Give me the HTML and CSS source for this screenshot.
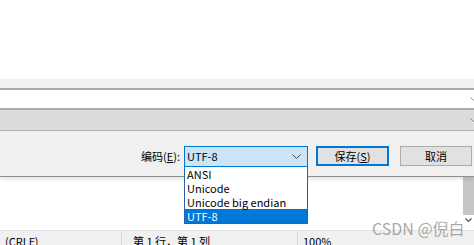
FILE: index.html
```html
<!DOCTYPE html>
<html lang="zh-CN">
<head>
<meta charset="utf-8">
<title>Save dialog</title>
<link rel="stylesheet" href="styles.css">
</head>
<body>
<div class="top"></div>
<div class="strip"></div>
<div class="field field-white">
  <svg class="chev" width="7" height="5" viewBox="0 0 7 5"><path d="M0.5 0.5 L3.5 3.5 L6.5 0.5" fill="none" stroke="#8a8a8a" stroke-width="1"/></svg>
</div>
<div class="field field-gray">
  <svg class="chev" width="7" height="5" viewBox="0 0 7 5"><path d="M0.5 0.5 L3.5 3.5 L6.5 0.5" fill="none" stroke="#8a8a8a" stroke-width="1"/></svg>
</div>
<div class="dialog">
  <span class="label">编码(<u>E</u>):</span>
  <div class="combo">
    <span class="combo-text">UTF-8</span>
    <svg class="combo-chev" width="9" height="5" viewBox="0 0 9 5"><path d="M0.5 0.5 L4.5 4.5 L8.5 0.5" fill="none" stroke="#444" stroke-width="1"/></svg>
    <ul class="list">
      <li>ANSI</li>
      <li>Unicode</li>
      <li>Unicode big endian</li>
      <li class="sel">UTF-8</li>
    </ul>
  </div>
  <button class="btn btn-default">保存(<u>S</u>)</button>
  <button class="btn">取消</button>
</div>
<div class="editor">
  <div class="editor-main"></div>
  <div class="vscroll">
    <div class="thumb"></div>
    <svg class="down" width="7" height="5" viewBox="0 0 7 5"><path d="M0.5 0.5 L3.5 3.5 L6.5 0.5" fill="none" stroke="#555" stroke-width="1.2"/></svg>
  </div>
</div>
<div class="status">
  <div class="sec sec1">(CRLF)</div>
  <div class="sec sec2">第 1 行，第 1 列</div>
  <div class="sec sec3">100%</div>
</div>
<div class="watermark">CSDN @倪白</div>
</body>
</html>
```
FILE: styles.css
```css
html, body {
  margin: 0;
  padding: 0;
}
body {
  width: 474px;
  height: 245px;
  overflow: hidden;
  background: #fff;
  font-family: "Noto Sans CJK SC", "Noto Sans", sans-serif;
  font-size: 11px;
  color: #000;
}
.top {
  height: 79px;
  background: #fff;
}
.strip {
  height: 9px;
  background: #f0f0f0;
}
.field {
  display: flex;
  align-items: center;
  justify-content: flex-end;
  border-top: 2px solid #a9a9a9;
}
.field-white {
  height: 18px;
  background: #fff;
}
.field-gray {
  height: 20px;
  background: #dcdcdc;
  border-bottom: 1px solid #b4b4b4;
}
.chev {
  margin-right: -3px;
}
.dialog {
  position: relative;
  z-index: 2;
  height: 46px;
  box-sizing: border-box;
  background: #f0f0f0;
  border-bottom: 1px solid #8f8f8f;
  box-shadow: 0 2px 4px rgba(0,0,0,0.12);
  display: flex;
  align-items: flex-start;
  justify-content: flex-end;
  padding: 15px 2px 0 0;
}
.label {
  margin-right: 4px;
  height: 21px;
  line-height: 21px;
  color: #000;
}
.combo {
  position: relative;
  width: 124px;
  height: 21px;
  box-sizing: border-box;
  border: 1px solid #0078d7;
  background: #cce4f7;
  display: flex;
  align-items: center;
  padding-left: 2px;
  margin-right: 8px;
}
.combo-text {
  flex: 1;
  line-height: 19px;
}
.combo-chev {
  margin-right: 6px;
}
.list {
  position: absolute;
  top: 20px;
  left: -1px;
  width: 124px;
  box-sizing: border-box;
  margin: 0;
  padding: 0;
  list-style: none;
  background: #fff;
  border: 1px solid #2a64a8;
  border-top: none;
  z-index: 3;
}
.list li {
  height: 14px;
  line-height: 14px;
  padding-left: 2px;
  white-space: nowrap;
}
.list li.sel {
  background: #0078d7;
  color: #fff;
}
.btn {
  height: 20px;
  width: 72px;
  box-sizing: border-box;
  margin: 0 0 0 11px;
  padding: 0;
  border: 1px solid #adadad;
  background: #e1e1e1;
  font-family: "Noto Sans CJK SC", sans-serif;
  font-size: 11px;
  line-height: 17px;
  color: #000;
}
.btn-default {
  width: 73px;
  margin-left: 0;
  border: 2px solid #0078d7;
  line-height: 15px;
}
.editor {
  display: flex;
  height: 53px;
}
.editor-main {
  flex: 1;
  background: #fff;
}
.vscroll {
  width: 11px;
  display: flex;
  flex-direction: column;
  align-items: center;
  background: #fff;
}
.thumb {
  width: 11px;
  height: 38px;
  background: #c6c6c6;
}
.down {
  margin-top: 3px;
}
.status {
  display: flex;
  height: 15px;
  background: #f0f0f0;
  border-top: 1px solid #e3e3e3;
  font-size: 11px;
  line-height: 21px;
  overflow: hidden;
}
.sec {
  box-sizing: border-box;
  white-space: nowrap;
}
.sec1 {
  width: 122px;
  padding-left: 5px;
  border-right: 1px solid #d9d9d9;
}
.sec2 {
  width: 176px;
  padding-left: 11px;
  border-right: 1px solid #d9d9d9;
}
.sec3 {
  flex: 1;
  padding-left: 5px;
}
.watermark {
  position: absolute;
  left: 372px;
  top: 218px;
  font-size: 16px;
  line-height: 20px;
  color: rgba(140, 140, 140, 0.75);
  white-space: nowrap;
  z-index: 5;
}
```
